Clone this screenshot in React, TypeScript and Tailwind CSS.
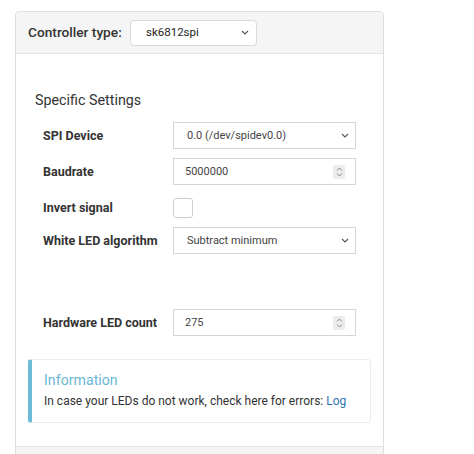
import React from "react";

const font = { fontFamily: "Roboto, 'Liberation Sans', sans-serif" };

function Chevron() {
  return (
    <svg width="8" height="5" viewBox="0 0 8 5" className="shrink-0">
      <path d="M1 1l3 3 3-3" fill="none" stroke="#555" strokeWidth="1.1" />
    </svg>
  );
}

function Spinner() {
  return (
    <span className="flex h-[14px] w-[12px] flex-col items-center justify-center gap-[2px] rounded-[2px] bg-[#ececec]">
      <svg width="7" height="4" viewBox="0 0 7 4">
        <path d="M1 3.5l2.5-2.5 2.5 2.5" fill="none" stroke="#888" strokeWidth="1" />
      </svg>
      <svg width="7" height="4" viewBox="0 0 7 4">
        <path d="M1 0.5l2.5 2.5 2.5-2.5" fill="none" stroke="#888" strokeWidth="1" />
      </svg>
    </span>
  );
}

function FakeSelect({ value }: { value: string }) {
  return (
    <div className="flex h-[27px] w-[183px] items-center justify-between border border-[#d5d5d5] bg-white pl-[13px] pr-[6px] text-[11px] text-[#444]">
      <span>{value}</span>
      <Chevron />
    </div>
  );
}

function NumberInput({ value }: { value: string }) {
  return (
    <div className="flex h-[27px] w-[183px] items-center justify-between border border-[#d5d5d5] bg-white pl-[11px] pr-[10px] text-[11px] text-[#444]">
      <span>{value}</span>
      <Spinner />
    </div>
  );
}

function Row({
  label,
  className,
  children,
}: {
  label: string;
  className?: string;
  children: React.ReactNode;
}) {
  return (
    <div className={"flex h-[27px] items-center " + (className ?? "")}>
      <span className="w-[130px] text-[12.5px] font-bold text-[#333]">{label}</span>
      {children}
    </div>
  );
}

export default function App() {
  return (
    <div className="h-[454px] w-[474px] overflow-hidden bg-white pl-[15px] pt-[11px]" style={font}>
      <div className="w-[369px] rounded-[4px] border border-[#dedede] bg-white">
        {/* Header: controller type */}
        <div className="flex h-[42px] items-center rounded-t-[4px] border-b border-[#e3e3e3] bg-[#f5f5f5] pl-[12px]">
          <span className="w-[102px] text-[13.7px] font-medium text-[#333]">Controller type:</span>
          <div className="flex h-[26px] w-[127px] items-center justify-between rounded-[4px] border border-[#d9d9d9] bg-white pl-[15px] pr-[7px] text-[11.5px] text-[#222]">
            <span>sk6812spi</span>
            <Chevron />
          </div>
        </div>

        {/* Specific settings */}
        <div className="px-[12px] pb-[23px]">
          <div className="pl-[7px] pt-[36px] text-[14.3px] text-[#333]">Specific Settings</div>
          <div className="mt-[11px] pl-[15px]">
            <Row label="SPI Device">
              <FakeSelect value="0.0 (/dev/spidev0.0)" />
            </Row>
            <Row label="Baudrate" className="mt-[9px]">
              <NumberInput value="5000000" />
            </Row>
            <Row label="Invert signal" className="mt-[9px]">
              <div className="h-[20px] w-[20px] rounded-[3px] border border-[#cfcfcf] bg-white" />
            </Row>
            <Row label="White LED algorithm" className="mt-[6px]">
              <FakeSelect value="Subtract minimum" />
            </Row>
            <Row label="Hardware LED count" className="mt-[55px]">
              <NumberInput value="275" />
            </Row>
          </div>

          {/* Information callout */}
          <div className="mt-[23px] rounded-[3px] border border-l-[4px] border-[#eeeeee] border-l-[#6bbcd6] pb-[12px] pl-[12px] pt-[11px]">
            <div className="text-[14.2px] leading-[18px] text-[#6ab7d4]">Information</div>
            <div className="mt-[3px] text-[12px] text-[#333]">
              In case your LEDs do not work, check here for errors:{" "}
              <a className="text-[#2f73b3]">Log</a>
            </div>
          </div>
        </div>

        {/* Footer */}
        <div className="h-[30px] border-t border-[#e3e3e3] bg-[#f5f5f5]" />
      </div>
    </div>
  );
}
